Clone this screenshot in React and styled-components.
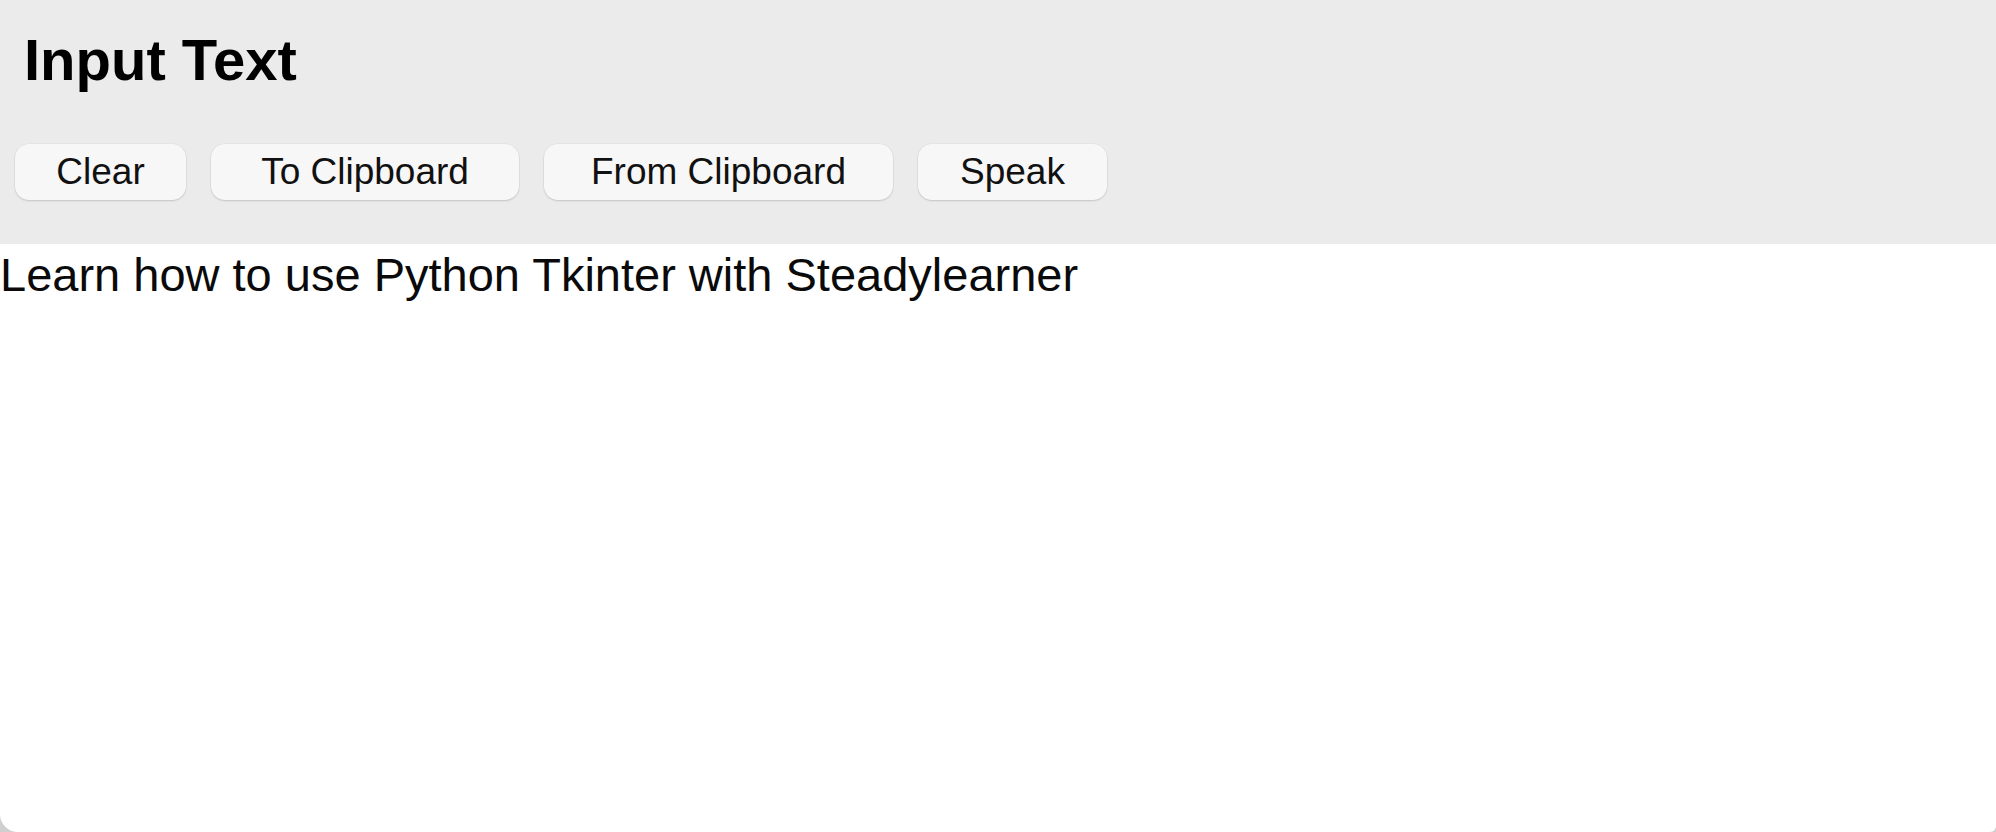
import React from "react";
import styled, { createGlobalStyle } from "styled-components";

const Global = createGlobalStyle`
  html, body { margin: 0; padding: 0; background: #cfcfcf; }
  body { font-family: "Liberation Sans", Arial, sans-serif; }
`;

const Window = styled.div`
  width: 1996px;
  height: 832px;
  display: flex;
  flex-direction: column;
  background: #ffffff;
  border-bottom-left-radius: 18px;
  border-bottom-right-radius: 6px;
  overflow: hidden;
`;

const Header = styled.div`
  background: #ebebeb;
  padding: 31px 0 44px 15px;
  display: flex;
  flex-direction: column;
  gap: 56px;
`;

const Title = styled.h1`
  margin: 0 0 0 9px;
  font-size: 58px;
  line-height: 57px;
  font-weight: 700;
  color: #000;
`;

const Toolbar = styled.div`
  display: flex;
  gap: 25px;
`;

const Button = styled.button`
  width: ${(p) => p.$w}px;
  height: 56px;
  padding: 0;
  border: none;
  border-radius: 14px;
  background: #f7f7f7;
  box-shadow: 0 1px 2px rgba(0, 0, 0, 0.14), 0 0 0 0.5px rgba(0, 0, 0, 0.05);
  font-family: "Liberation Sans", Arial, sans-serif;
  font-size: 37px;
  color: #111;
  display: flex;
  align-items: center;
  justify-content: center;
`;

const TextArea = styled.div`
  flex: 1;
  padding: 4px 0 0 0;
  font-size: 47px;
  line-height: 54px;
  color: #0a0a0a;
`;

export default function App() {
  return (
    <>
      <Global />
      <Window>
        <Header>
          <Title>Input Text</Title>
          <Toolbar>
            <Button $w={171}>Clear</Button>
            <Button $w={308}>To Clipboard</Button>
            <Button $w={349}>From Clipboard</Button>
            <Button $w={189}>Speak</Button>
          </Toolbar>
        </Header>
        <TextArea>Learn how to use Python Tkinter with Steadylearner</TextArea>
      </Window>
    </>
  );
}
